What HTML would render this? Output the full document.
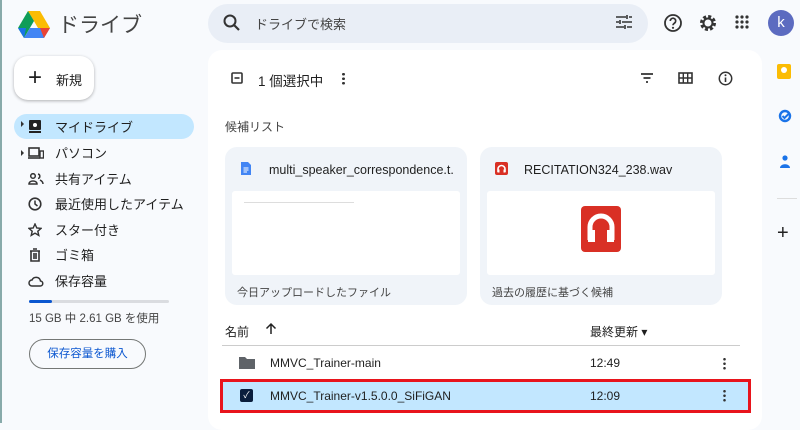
<!DOCTYPE html>
<html><head><meta charset="utf-8"><style>
*{margin:0;padding:0;box-sizing:border-box}
body{width:800px;height:423px;overflow:hidden;background:#f8fafd;font-family:"Liberation Sans","Noto Sans CJK JP",sans-serif;color:#1f1f1f;position:relative}
.a{position:absolute}
.nav{position:absolute;left:14px;height:25px;width:180px;font-size:13px;display:flex;align-items:center;padding-left:14px;color:#1f1f1f}
.nav svg{position:absolute;left:14px}
.nav span{margin-left:27px}
.card{position:absolute;top:147px;width:242px;height:158px;background:#f0f4f9;border-radius:12px}
.thumb{position:absolute;left:7px;top:44px;width:228px;height:84px;background:#fff;border-radius:3px}
.ct{position:absolute;left:44px;top:16px;font-size:12.5px;width:186px;white-space:nowrap;overflow:hidden}
.cb{position:absolute;left:12px;top:137px;font-size:11px;color:#444}
</style></head><body>
<div class="a" style="left:0;top:0;width:2px;height:423px;background:#8aa"></div>
<svg class="a" style="left:18px;top:10px" width="32" height="28" viewBox="0 0 32 28"><path d="M10 1h12l10 17h-12z" fill="#fbbc04"/><path d="M10 1L0 18l6 10 10-17z" fill="#0f9d58"/><path d="M6 28h20l6-10H12z" fill="#4285f4"/><path d="M26 28l6-10h-10z" fill="#ea4335"/><path d="M6 28L0 18h8z" fill="#1a73e8"/></svg>
<div class="a" style="left:58px;top:9px;font-size:21px;color:#444">ドライブ</div>
<div class="a" style="left:208px;top:4px;width:440px;height:39px;background:#e9eef6;border-radius:20px"></div>
<svg class="a" style="left:222px;top:13px" width="20" height="20" viewBox="0 0 20 20"><circle cx="8" cy="8" r="5.5" fill="none" stroke="#333" stroke-width="2"/><path d="M12 12l5 5" stroke="#333" stroke-width="2.2"/></svg>
<div class="a" style="left:255px;top:14px;font-size:13px;color:#444">ドライブで検索</div>
<svg class="a" style="left:615px;top:14px" width="18" height="16" viewBox="0 0 18 16"><path d="M1 3h10M14 3h3M1 8h3M7 8h10M1 13h8M12 13h5M12 1v4M5 6v4M10 11v4" stroke="#333" stroke-width="1.6"/></svg>
<svg class="a" style="left:663px;top:13px" width="20" height="20" viewBox="0 0 20 20"><circle cx="10" cy="10" r="8" fill="none" stroke="#333" stroke-width="1.8"/><path d="M7.3 8a2.7 2.7 0 115 1.3c-.8 1-2.3 1.4-2.3 3" fill="none" stroke="#333" stroke-width="1.7"/><circle cx="10" cy="14.8" r="1.1" fill="#333"/></svg>
<svg class="a" style="left:698px;top:13px" width="20" height="20" viewBox="0 0 20 20"><circle cx="10" cy="10" r="6.5" fill="none" stroke="#333" stroke-width="3" stroke-dasharray="3 2.1"/><circle cx="10" cy="10" r="4.5" fill="none" stroke="#333" stroke-width="2"/></svg>
<svg class="a" style="left:735px;top:15px" width="14" height="14" viewBox="0 0 14 14" fill="#333"><circle cx="2" cy="2" r="1.6"/><circle cx="7" cy="2" r="1.6"/><circle cx="12" cy="2" r="1.6"/><circle cx="2" cy="7" r="1.6"/><circle cx="7" cy="7" r="1.6"/><circle cx="12" cy="7" r="1.6"/><circle cx="2" cy="12" r="1.6"/><circle cx="7" cy="12" r="1.6"/><circle cx="12" cy="12" r="1.6"/></svg>
<div class="a" style="left:768px;top:10px;width:26px;height:26px;border-radius:50%;background:#5c6bc0;color:#fff;font-size:15px;text-align:center;line-height:25px">k</div>
<div class="a" style="left:14px;top:56px;width:80px;height:44px;background:#fff;border-radius:14px;box-shadow:0 1px 3px rgba(0,0,0,.3)"></div>
<div class="a" style="left:28px;top:64px;font-size:24px;font-weight:300">+</div>
<div class="a" style="left:56px;top:70px;font-size:13px">新規</div>
<div class="a" style="left:14px;top:114px;width:180px;height:25px;background:#c2e7ff;border-radius:13px"></div>
<div class="a" style="left:21px;top:121px;width:0;height:0;border-left:3px solid #333;border-top:3px solid transparent;border-bottom:3px solid transparent"></div>
<div class="a" style="left:21px;top:150px;width:0;height:0;border-left:3px solid #333;border-top:3px solid transparent;border-bottom:3px solid transparent"></div>
<div class="nav" style="top:114px"><svg width="14" height="13" viewBox="0 0 14 13"><rect x="1" y="0" width="12" height="10" rx="1" fill="#222"/><rect x="1" y="11" width="12" height="2" fill="#222"/><circle cx="7" cy="5" r="2" fill="#fff"/></svg><span>マイドライブ</span></div>
<div class="nav" style="top:140px"><svg width="16" height="12" viewBox="0 0 16 12"><rect x="1" y="1" width="10" height="8" fill="none" stroke="#333" stroke-width="1.6"/><path d="M0 11h12" stroke="#333" stroke-width="1.6"/><rect x="12" y="4" width="3.5" height="7" fill="none" stroke="#333" stroke-width="1.4"/></svg><span>パソコン</span></div>
<div class="nav" style="top:166px"><svg width="16" height="12" viewBox="0 0 16 12"><circle cx="5" cy="3" r="2.3" fill="none" stroke="#333" stroke-width="1.5"/><path d="M1 11c0-4 8-4 8 0z" fill="none" stroke="#333" stroke-width="1.5"/><path d="M10 1a2.3 2.3 0 010 4.5M12 7c2 1 3 2 3 4" fill="none" stroke="#333" stroke-width="1.5"/></svg><span>共有アイテム</span></div>
<div class="nav" style="top:191px"><svg width="14" height="14" viewBox="0 0 14 14"><circle cx="7" cy="7" r="5.8" fill="none" stroke="#333" stroke-width="1.6"/><path d="M7 3.5V7l2.5 2" fill="none" stroke="#333" stroke-width="1.5"/></svg><span>最近使用したアイテム</span></div>
<div class="nav" style="top:217px"><svg width="14" height="14" viewBox="0 0 14 14"><path d="M7 1l1.8 4 4.2.4-3.2 2.8 1 4.2L7 10.2 3.2 12.4l1-4.2L1 5.4l4.2-.4z" fill="none" stroke="#333" stroke-width="1.4"/></svg><span>スター付き</span></div>
<div class="nav" style="top:242px"><svg width="14" height="14" viewBox="0 0 14 14"><path d="M2 3h10M5 1h4M3 3v10h8V3M6 5v6M8 5v6" fill="none" stroke="#333" stroke-width="1.6"/></svg><span>ゴミ箱</span></div>
<div class="nav" style="top:268px"><svg width="16" height="12" viewBox="0 0 16 12"><path d="M4 11a3 3 0 010-6 4.5 4.5 0 018.5 1A2.5 2.5 0 0112 11z" fill="none" stroke="#333" stroke-width="1.5"/></svg><span>保存容量</span></div>
<div class="a" style="left:29px;top:300px;width:140px;height:3px;background:#dadce0;border-radius:2px"></div>
<div class="a" style="left:29px;top:300px;width:23px;height:3px;background:#0b57d0;border-radius:2px"></div>
<div class="a" style="left:29px;top:310px;font-size:11.5px;color:#444">15 GB 中 2.61 GB を使用</div>
<div class="a" style="left:29px;top:339px;width:117px;height:30px;border:1px solid #747775;border-radius:16px;color:#0b57d0;font-size:11.5px;text-align:center;line-height:28px">保存容量を購入</div>
<div class="a" style="left:208px;top:50px;width:554px;height:380px;background:#fff;border-radius:14px"></div>
<svg class="a" style="left:231px;top:72px" width="12" height="12" viewBox="0 0 12 12"><rect x="1" y="1" width="10" height="10" rx="1" fill="none" stroke="#333" stroke-width="1.6"/><path d="M3.5 6h5" stroke="#333" stroke-width="1.6"/></svg>
<div class="a" style="left:258px;top:70px;font-size:13.5px">1 個選択中</div>
<div class="a" style="left:342px;top:72px;width:3px;height:13px;background:radial-gradient(circle,#333 1.3px,transparent 1.5px) 0 0/3px 4.5px"></div>
<svg class="a" style="left:641px;top:73px" width="12" height="10" viewBox="0 0 12 10"><path d="M0 1h12M2.5 5h7M5 9h2" stroke="#333" stroke-width="1.7"/></svg>
<svg class="a" style="left:678px;top:72px" width="15" height="12" viewBox="0 0 15 12"><rect x="1" y="1" width="13" height="10" fill="none" stroke="#333" stroke-width="1.6"/><path d="M1 6h13M5.3 1v10M9.7 1v10" stroke="#333" stroke-width="1.4"/></svg>
<svg class="a" style="left:718px;top:71px" width="15" height="15" viewBox="0 0 15 15"><circle cx="7.5" cy="7.5" r="6.2" fill="none" stroke="#333" stroke-width="1.5"/><path d="M7.5 6.5v4.5" stroke="#333" stroke-width="1.6"/><circle cx="7.5" cy="4.3" r="1" fill="#333"/></svg>
<div class="a" style="left:225px;top:118px;font-size:12px;color:#444">候補リスト</div>
<div class="card" style="left:225px"><svg class="a" style="left:16px;top:15px" width="10" height="13" viewBox="0 0 10 13"><path d="M0 0h7l3 3v10H0z" fill="#4285f4"/><path d="M2.5 6h5M2.5 8h5M2.5 10h3.5" stroke="#fff" stroke-width="1"/></svg><div class="ct">multi_speaker_correspondence.t...</div><div class="thumb"><div class="a" style="left:12px;top:11px;width:110px;height:1px;background:#ddd"></div></div><div class="cb">今日アップロードしたファイル</div></div>
<div class="card" style="left:480px"><svg class="a" style="left:15px;top:15px" width="13" height="13" viewBox="0 0 13 13"><rect width="13" height="13" rx="2" fill="#d93025"/><path d="M3 10V7a3.5 3.5 0 017 0v3" fill="none" stroke="#fff" stroke-width="1.6"/><rect x="2.5" y="7.5" width="2" height="3" fill="#fff"/><rect x="8.5" y="7.5" width="2" height="3" fill="#fff"/></svg><div class="ct">RECITATION324_238.wav</div><div class="thumb"><svg class="a" style="left:94px;top:15px" width="40" height="46" viewBox="0 0 40 46"><rect width="40" height="46" rx="4" fill="#d93025"/><path d="M9 34V21a11 11 0 0122 0v13" fill="none" stroke="#fff" stroke-width="5"/><rect x="7" y="24" width="7" height="12" fill="#fff"/><rect x="26" y="24" width="7" height="12" fill="#fff"/></svg></div><div class="cb">過去の履歴に基づく候補</div></div>
<div class="a" style="left:225px;top:323px;font-size:12px">名前</div>
<svg class="a" style="left:265px;top:322px" width="12" height="13" viewBox="0 0 12 13"><path d="M6 12V2M1.5 6.5L6 2l4.5 4.5" fill="none" stroke="#222" stroke-width="1.5"/></svg>
<div class="a" style="left:590px;top:323px;font-size:12px">最終更新 ▾</div>
<div class="a" style="left:222px;top:345px;width:518px;height:1px;background:#ccc"></div>
<svg class="a" style="left:239px;top:356px" width="16" height="13" viewBox="0 0 16 13"><path d="M0 1h6l2 2h8v10H0z" fill="#5f6368"/></svg>
<div class="a" style="left:270px;top:356px;font-size:12px">MMVC_Trainer-main</div>
<div class="a" style="left:590px;top:356px;font-size:12px">12:49</div>
<div class="a" style="left:723px;top:357px;width:3px;height:13px;background:radial-gradient(circle,#333 1.2px,transparent 1.4px) 0 0/3px 4.5px"></div>
<div class="a" style="left:220px;top:379px;width:531px;height:34px;border:3px solid #e8141c;background:#c2e7ff"></div>
<div class="a" style="left:240px;top:389px;width:13px;height:13px;background:#0a1e3c;border-radius:2px;color:#fff;font-size:9px;text-align:center;line-height:13px">✓</div>
<div class="a" style="left:270px;top:389px;font-size:12px">MMVC_Trainer-v1.5.0.0_SiFiGAN</div>
<div class="a" style="left:590px;top:389px;font-size:12px">12:09</div>
<div class="a" style="left:723px;top:389px;width:3px;height:13px;background:radial-gradient(circle,#333 1.2px,transparent 1.4px) 0 0/3px 4.5px"></div>
<div class="a" style="left:777px;top:64px;width:14px;height:15px;background:#fbbc04;border-radius:2px"></div>
<div class="a" style="left:781px;top:67px;width:6px;height:6px;border-radius:50%;background:#fff"></div>
<svg class="a" style="left:778px;top:109px" width="14" height="14" viewBox="0 0 14 14"><circle cx="7" cy="7" r="5" fill="none" stroke="#1a73e8" stroke-width="2.4"/><path d="M4.5 7l2 2 5-5" fill="none" stroke="#1a73e8" stroke-width="2"/></svg>
<svg class="a" style="left:779px;top:155px" width="12" height="14" viewBox="0 0 12 14"><circle cx="6" cy="3" r="2.6" fill="#1a73e8"/><path d="M1 13c0-5 10-5 10 0z" fill="#1a73e8"/></svg>
<div class="a" style="left:777px;top:198px;width:20px;height:1px;background:#ddd"></div>
<div class="a" style="left:777px;top:222px;font-size:20px;color:#222">+</div>
</body></html>
